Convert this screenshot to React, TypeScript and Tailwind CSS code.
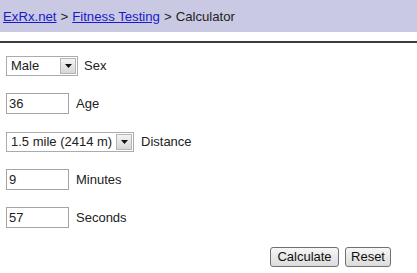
import React from "react";

function FakeSelect({ value, width }: { value: string; width: string }) {
  return (
    <div className={`${width} h-[20px] border border-[#a5acb2] bg-white flex items-center justify-between pl-[4px] pr-[1px]`}>
      <span className="leading-none">{value}</span>
      <div className="w-[16px] h-[16px] border border-[#b5b5b5] bg-gradient-to-b from-[#f4f4f4] to-[#d6d6d6] flex items-center justify-center">
        <svg width="7" height="4" viewBox="0 0 7 4"><path d="M0 0h7L3.5 4z" fill="#111" /></svg>
      </div>
    </div>
  );
}

function FakeInput({ value }: { value: string }) {
  return (
    <div className="w-[63px] h-[21px] border border-[#a5a5a5] bg-white flex items-center pl-[2px]">
      <span className="leading-none">{value}</span>
    </div>
  );
}

function Btn({ label, width }: { label: string; width: string }) {
  return (
    <div className={`${width} h-[20px] border border-[#707070] rounded-[3px] bg-gradient-to-b from-[#f6f6f6] to-[#dcdcdc] flex items-center justify-center text-[#111]`}>
      {label}
    </div>
  );
}

export default function App() {
  return (
    <div className="w-[417px] h-[273px] bg-white text-[13px] text-[#222]" style={{ fontFamily: '"Liberation Sans", Arial, sans-serif' }}>
      <div className="h-[32px] bg-[#c9c9e3] flex items-center pl-[3px] pt-[1px] text-[13.2px]">
        <a className="text-[#1a1ac8] underline">ExRx.net</a>
        <span className="mx-[4px]">&gt;</span>
        <a className="text-[#1a1ac8] underline">Fitness Testing</a>
        <span className="mx-[4px]">&gt;</span>
        <span>Calculator</span>
      </div>
      <div className="h-[9px]" />
      <div className="h-[2px] bg-[#3c3c3c]" />
      <div className="pl-[6px] pt-[12px] flex flex-col gap-[17px]">
        <div className="flex items-center gap-[6px] h-[21px]">
          <FakeSelect value="Male" width="w-[72px]" />
          <span>Sex</span>
        </div>
        <div className="flex items-center gap-[7px] h-[21px]">
          <FakeInput value="36" />
          <span>Age</span>
        </div>
        <div className="flex items-center gap-[7px] h-[21px]">
          <FakeSelect value="1.5 mile (2414 m)" width="w-[128px]" />
          <span>Distance</span>
        </div>
        <div className="flex items-center gap-[7px] h-[21px]">
          <FakeInput value="9" />
          <span>Minutes</span>
        </div>
        <div className="flex items-center gap-[7px] h-[21px]">
          <FakeInput value="57" />
          <span>Seconds</span>
        </div>
      </div>
      <div className="flex justify-end gap-[6px] pr-[26px] pt-[19px]">
        <Btn label="Calculate" width="w-[69px]" />
        <Btn label="Reset" width="w-[46px]" />
      </div>
    </div>
  );
}
